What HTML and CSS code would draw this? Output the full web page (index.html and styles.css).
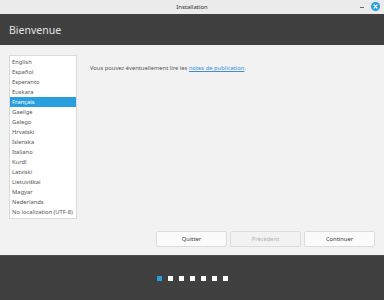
FILE: index.html
```html
<!DOCTYPE html>
<html lang="fr">

<head>
  <meta charset="UTF-8">
  <meta name="viewport" content="width=device-width, initial-scale=1.0">
  <title>Installation</title>
  <link rel="stylesheet" href="styles.css">
</head>

<body>
  <div class="window">
    <div class="titlebar">
      <span class="title">Installation</span>
      <div class="controls">
        <span class="min"></span>
        <span class="close">
          <svg width="9" height="9" viewBox="0 0 9 9">
            <circle cx="4.5" cy="4.5" r="4.5" fill="#2a9fdf" />
            <path d="M3 3 L6 6 M6 3 L3 6" stroke="#fff" stroke-width="1.2" stroke-linecap="round" />
          </svg>
        </span>
      </div>
    </div>
    <div class="header">
      <h1>Bienvenue</h1>
    </div>
    <div class="main">
      <div class="top">
        <ul class="langs">
          <li>English</li>
          <li>Español</li>
          <li>Esperanto</li>
          <li>Euskara</li>
          <li class="selected">Français</li>
          <li>Gaeilge</li>
          <li>Galego</li>
          <li>Hrvatski</li>
          <li>Íslenska</li>
          <li>Italiano</li>
          <li>Kurdî</li>
          <li>Latviski</li>
          <li>Lietuviškai</li>
          <li>Magyar</li>
          <li>Nederlands</li>
          <li>No localization (UTF-8)</li>
        </ul>
        <p class="intro">Vous pouvez éventuellement lire les <a href="#">notes de publication</a>.</p>
      </div>
      <div class="actions">
        <button>Quitter</button>
        <button disabled>Précédent</button>
        <button>Continuer</button>
      </div>
    </div>
    <div class="footer">
      <span class="dot active"></span>
      <span class="dot"></span>
      <span class="dot"></span>
      <span class="dot"></span>
      <span class="dot"></span>
      <span class="dot"></span>
      <span class="dot"></span>
    </div>
  </div>
</body>

</html>
```

FILE: styles.css
```css
body,html{
  height:100%;
}
body {
  margin: 0;
  padding: 0;
  font-family: 'Noto Sans', 'DejaVu Sans', sans-serif;
  background-color: #f2f2f2;
}

.window {
  display: flex;
  flex-direction: column;
  height: 300px;
}

.titlebar {
  height: 14px;
  background-color: #ebebeb;
  display: flex;
  justify-content: center;
  align-items: center;
  position: relative;
}

.title {
  font-size: 6px;
  color: #2e2e2e;
}

.controls {
  position: absolute;
  right: 4px;
  top: 2px;
  display: flex;
  align-items: center;
  gap: 7px;
}

.min {
  width: 4px;
  height: 1px;
  background-color: #666;
  margin-top: 2px;
}

.close svg {
  display: block;
}

.header {
  height: 31px;
  background-color: #404040;
  display: flex;
  align-items: center;
  padding-left: 9px;
}

h1 {
  margin: 0;
  font-size: 10.5px;
  font-weight: normal;
  color: #e2e2e2;
}

.main {
  height: 210px;
  box-sizing: border-box;
  padding: 10px 9px 8px 9px;
  display: flex;
  flex-direction: column;
}

.top {
  display: flex;
}

.langs {
  list-style: none;
  margin: 0;
  padding: 1px 0;
  width: 68px;
  box-sizing: border-box;
  background-color: #fff;
  border: 1px solid #dadada;
}

.langs li {
  height: 10px;
  line-height: 10px;
  font-size: 5.8px;
  color: #555;
  padding-left: 2px;
  white-space: nowrap;
}

.langs li.selected {
  background-color: #2a9fdf;
  color: #fff;
}

.intro {
  margin: 9px 0 0 13px;
  font-size: 5.8px;
  color: #555;
}

.intro a {
  color: #3b8fd9;
}

.actions {
  margin-top: auto;
  display: flex;
  justify-content: flex-end;
  gap: 3px;
}

button {
  width: 71px;
  height: 16px;
  padding: 0;
  font-family: inherit;
  font-size: 5.8px;
  color: #3a3a3a;
  background-color: #fbfbfb;
  border: 1px solid #dcdcdc;
  border-radius: 2px;
}

button:disabled {
  background-color: #f2f2f2;
  color: #b0b0b0;
}

.footer {
  flex: 1;
  background-color: #404040;
  border-top: 1px solid #4d4d4d;
  display: flex;
  justify-content: center;
  align-items: center;
  gap: 6px;
}

.dot {
  width: 5px;
  height: 5px;
  background-color: #fff;
}

.dot.active {
  background-color: #2a9fdf;
}
```
